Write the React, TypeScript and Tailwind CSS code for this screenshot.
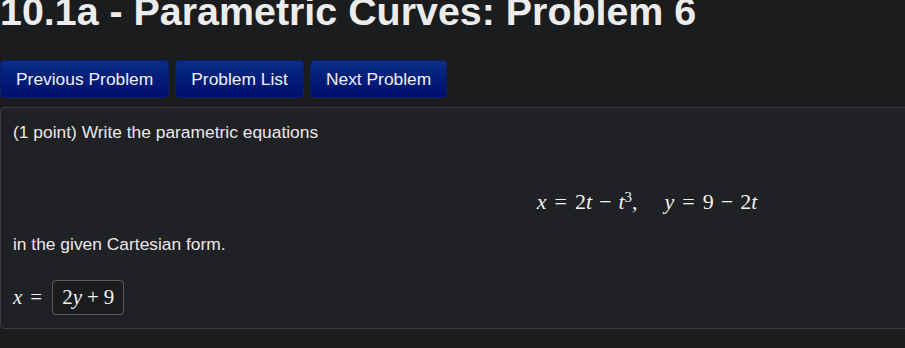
import React from 'react'

const sans = "font-['Liberation_Sans',Arial,sans-serif]"
const serif = "font-['Liberation_Serif','DejaVu_Serif',serif]"

function NavButton({ label }: { label: string }) {
  return (
    <button className="h-[38px] rounded-[4px] border border-[#0b1f66] bg-gradient-to-b from-[#0c2c86] to-[#000c6c] px-[15px] text-[17.4px] text-[#eef0f6]">
      {label}
    </button>
  )
}

const V = ({ children }: { children: React.ReactNode }) => <i className="italic">{children}</i>
// TeX-ish spacing around relations and binary operators
const Rel = ({ children }: { children: React.ReactNode }) => <span className="mx-[8px]">{children}</span>
const Bin = ({ children }: { children: React.ReactNode }) => <span className="mx-[7px]">{children}</span>

export default function App() {
  return (
    <div className={`h-[348px] w-[905px] overflow-hidden bg-[#1b1c1e] text-[#e9e9ea] ${sans}`}>
      <h1 className="-mt-[11px] text-[39.4px] font-bold leading-[44px] whitespace-nowrap text-[#ececec]">
        10.1a - Parametric Curves: Problem 6
      </h1>

      <div className="mt-[27px] flex gap-[6px]">
        <NavButton label="Previous Problem" />
        <NavButton label="Problem List" />
        <NavButton label="Next Problem" />
      </div>

      <div className="mt-[9px] w-[1294px] rounded-[4px] border border-[#3b3c3e] bg-[#202124] px-[12px] pt-[12px] pb-[13px]">
        <p className="text-[17.4px] leading-[24px]">(1 point) Write the parametric equations</p>

        <div className={`mt-[46px] flex justify-center text-[22px] leading-[24px] text-[#f2f2f2] ${serif}`}>
          <span className="whitespace-nowrap">
            <V>x</V>
            <Rel>=</Rel>2<V>t</V>
            <Bin>−</Bin>
            <V>t</V>
            <sup className="text-[15px]">3</sup>,
            <span className="inline-block w-[27px]" />
            <V>y</V>
            <Rel>=</Rel>9<Bin>−</Bin>2<V>t</V>
          </span>
        </div>

        <p className="mt-[18px] text-[17.4px] leading-[24px]">in the given Cartesian form.</p>

        <div className={`mt-[24px] flex items-center text-[21px] text-[#f2f2f2] ${serif}`}>
          <span className="whitespace-nowrap">
            <V>x</V>
            <Rel>=</Rel>
          </span>
          <div className="ml-[2px] flex h-[35px] items-center whitespace-nowrap rounded-[4px] border border-[#5a5b5e] bg-[#1b1c1e] px-[9px]">
            2<V>y</V>
            <span className="mx-[5px]">+</span>9
          </div>
        </div>
      </div>
    </div>
  )
}
